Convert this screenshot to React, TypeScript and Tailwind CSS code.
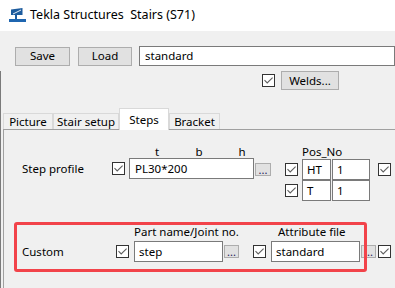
import * as React from 'react';

const Check: React.FC<{ className?: string }> = ({ className = '' }) => (
  <span className={`w-[13px] h-[13px] border border-[#333333] bg-white flex items-center justify-center shrink-0 ${className}`}>
    <svg width="9" height="7" viewBox="0 0 9 7">
      <path d="M0.5 3.2 L3.2 5.9 L8.6 0.6" stroke="#5f5f5f" strokeWidth="1.1" fill="none" />
    </svg>
  </span>
);

const Field: React.FC<{ value: string; className?: string }> = ({ value, className = '' }) => (
  <div className={`h-[21px] border border-[#7a7a7a] bg-white flex items-center pl-[4px] shrink-0 ${className}`}>{value}</div>
);

const Dots: React.FC<{ className?: string }> = ({ className = '' }) => (
  <div className={`h-[13px] border border-[#adadad] bg-[#e1e1e1] flex items-end justify-center text-[11px] leading-[10px] text-[#1b1b5a] shrink-0 ${className}`}>...</div>
);

const Btn: React.FC<{ label: string; className?: string }> = ({ label, className = '' }) => (
  <div className={`h-[19px] border border-[#adadad] bg-[#e1e1e1] flex items-center justify-center shrink-0 ${className}`}>{label}</div>
);

const tabs = ['Picture', 'Stair setup', 'Steps', 'Bracket'];
const tabWidths: { [k: string]: string } = {
  Picture: 'w-[50px]',
  'Stair setup': 'w-[66px]',
  Steps: 'w-[50px]',
  Bracket: 'w-[51px]',
};

const App: React.FC = () => {
  return (
    <div className="w-[395px] h-[288px] overflow-hidden relative bg-[#f0f0f0] text-[11.5px] text-black [font-family:'Noto_Sans',sans-serif]">
      {/* title bar */}
      <div className="h-[31px] bg-white flex items-center pl-[9px]">
        <svg width="17" height="15" viewBox="0 0 17 15" className="shrink-0">
          <path d="M2 1.5 L13.5 0 L13.5 7 L2 7 Z" fill="#1d5c9e" />
          <path d="M4 6 L12 2" stroke="#ffffff" strokeWidth="0.9" />
          <rect x="6" y="7" width="2" height="4" fill="#1d5c9e" />
          <rect x="0" y="11" width="17" height="3" fill="#1f66b0" />
        </svg>
        <span className="ml-[4px] whitespace-pre text-[12.5px]">Tekla Structures  Stairs (S71)</span>
      </div>

      {/* save / load row */}
      <div className="flex items-center h-[20px] mt-[15px]">
        <Btn label="Save" className="ml-[15px] w-[55px]" />
        <Btn label="Load" className="ml-[8px] w-[54px]" />
        <div className="ml-[7px] h-[20px] w-[280px] border border-[#7a7a7a] bg-white flex items-center pl-[5px]">standard</div>
      </div>

      <div className="border-l border-[#7a7a7a] mt-[5px]">
        {/* welds row */}
        <div className="flex items-center h-[19px]">
          <Check className="ml-[261px]" />
          <Btn label="Welds..." className="ml-[6px] w-[58px]" />
        </div>

        {/* tabs */}
        <div className="flex items-end h-[21px] mt-[18px] pl-[2px]">
          {tabs.map(t =>
            t === 'Steps' ? (
              <div key={t} className={`${tabWidths[t]} h-[22px] -mb-px bg-white border border-b-0 border-[#d9d9d9] flex items-center justify-center relative z-10`}>{t}</div>
            ) : (
              <div key={t} className={`${tabWidths[t]} h-[16px] border border-b-0 border-[#d9d9d9] flex items-center justify-center`}>{t}</div>
            )
          )}
        </div>

        {/* tab panel */}
        <div className="ml-[2px] border-l border-t border-[#a0a0a0] h-[170px]">
          {/* column labels */}
          <div className="flex items-center h-[12px] mt-[16px] leading-[12px]">
            <div className="ml-[125px] w-[125px] flex">
              <span className="ml-[23px] w-[10px] text-center">t</span>
              <span className="ml-[32px] w-[10px] text-center">b</span>
              <span className="ml-[33px] w-[10px] text-center">h</span>
            </div>
            <span className="ml-[48px]">Pos_No</span>
          </div>

          {/* step profile row */}
          <div className="flex items-center h-[21px]">
            <div className="w-[108px] pl-[18px] shrink-0">Step profile</div>
            <Check />
            <Field value="PL30*200" className="ml-[4px] w-[125px] pl-[5px]" />
            <Dots className="ml-[1px] w-[16px] mt-[2px]" />
            <Check className="ml-[14px] mt-[1px]" />
            <Field value="HT" className="ml-[4px] w-[29px] mt-[2px] pl-[3px]" />
            <Field value="1" className="ml-[1px] w-[38px] mt-[2px]" />
            <Check className="ml-[8px] mt-[1px]" />
          </div>

          {/* second pos row */}
          <div className="flex items-center h-[21px] mt-[1px]">
            <Check className="ml-[281px]" />
            <Field value="T" className="ml-[4px] w-[29px] pl-[3px]" />
            <Field value="1" className="ml-[1px] w-[38px]" />
          </div>

          {/* custom labels */}
          <div className="flex items-center h-[12px] mt-[25px] leading-[12px]">
            <span className="ml-[130px] w-[144px] shrink-0">Part name/Joint no.</span>
            <span>Attribute file</span>
          </div>

          {/* custom row */}
          <div className="flex items-center h-[21px] mt-[3px]">
            <div className="w-[112px] pl-[18px] shrink-0">Custom</div>
            <Check />
            <Field value="step" className="ml-[5px] w-[89px]" />
            <Dots className="ml-[1px] w-[15px]" />
            <Check className="ml-[14px]" />
            <Field value="standard" className="ml-[5px] w-[89px]" />
            <Dots className="ml-[1px] w-[15px]" />
            <Check className="ml-[2px]" />
          </div>
        </div>
      </div>

      {/* highlight annotation */}
      <div className="absolute left-[14px] top-[222px] w-[353px] h-[50px] border-[3px] border-[#f2434a] rounded-[3px]" />
    </div>
  );
};

export default App;
